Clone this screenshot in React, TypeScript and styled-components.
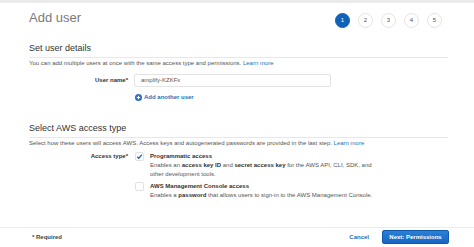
import React from "react";
import styled, { createGlobalStyle } from "styled-components";

const GlobalStyle = createGlobalStyle`
  html, body {
    margin: 0;
    padding: 0;
    background: #ffffff;
  }
  body {
    font-family: "Liberation Sans", Arial, sans-serif;
    color: #444;
  }
`;

const Page = styled.div`
  width: 474px;
  height: 247px;
  box-sizing: border-box;
  border-top: 3px solid #ebebeb;
  display: flex;
  flex-direction: column;
  overflow: hidden;
`;

const Header = styled.div`
  display: flex;
  justify-content: space-between;
  align-items: center;
  padding: 6px 32px 0 29px;
  height: 22px;
`;

const Title = styled.h1`
  margin: 0;
  font-size: 13px;
  font-weight: normal;
  color: #7a7a7a;
  line-height: 16px;
  margin-top: -4px;
`;

const Steps = styled.div`
  display: flex;
  gap: 8px;
`;

const Step = styled.div<{ active?: boolean }>`
  width: 15px;
  height: 15px;
  box-sizing: border-box;
  border-radius: 50%;
  display: flex;
  align-items: center;
  justify-content: center;
  font-size: 6px;
  color: ${({ active }) => (active ? "#ffffff" : "#555")};
  background: ${({ active }) => (active ? "#1161b8" : "#ffffff")};
  border: 1px solid ${({ active }) => (active ? "#1161b8" : "#e4e4e4")};
`;

const Section = styled.section<{ top: number }>`
  padding: 0 26px 0 29px;
  margin-top: ${({ top }) => top}px;
`;

const SectionTitle = styled.h2`
  margin: 0;
  font-size: 9px;
  font-weight: normal;
  color: #333;
  line-height: 11px;
  padding-bottom: 3px;
  border-bottom: 1px solid #e8e8e8;
`;

const Description = styled.p`
  margin: 1px 0 0;
  font-size: 6px;
  line-height: 8px;
  color: #555;
`;

const Link = styled.a`
  color: #2a6fb8;
  text-decoration: none;
`;

const Row = styled.div<{ top: number }>`
  display: flex;
  align-items: flex-start;
  margin-top: ${({ top }) => top}px;
`;

const Label = styled.div<{ lineTop?: number }>`
  width: 99px;
  text-align: right;
  padding-right: 6px;
  font-size: 6px;
  font-weight: bold;
  color: #333;
  line-height: 8px;
  padding-top: ${({ lineTop }) => lineTop ?? 0}px;
`;

const Control = styled.div`
  display: flex;
  flex-direction: column;
`;

const Input = styled.div`
  width: 197px;
  height: 13px;
  box-sizing: border-box;
  border: 1px solid #e3e3e3;
  border-radius: 2px;
  padding: 0 6px;
  font-size: 6px;
  line-height: 11px;
  color: #555;
`;

const AddLink = styled.div`
  display: flex;
  align-items: center;
  gap: 2px;
  margin-top: 6px;
  font-size: 6px;
  font-weight: bold;
  color: #2a6fb8;
  line-height: 8px;
  padding-left: 1px;
`;

const Option = styled.div<{ top?: number }>`
  display: flex;
  gap: 6px;
  margin-top: ${({ top }) => top ?? 0}px;
`;

const Box = styled.div`
  width: 9px;
  height: 9px;
  box-sizing: border-box;
  border: 1px solid #e2e2e2;
  border-radius: 2px;
  background: #fff;
  display: flex;
  align-items: center;
  justify-content: center;
  flex-shrink: 0;
  margin-left: 1px;
`;

const OptionText = styled.div`
  font-size: 6px;
  line-height: 9px;
  color: #555;
  width: 232px;

  strong {
    color: #333;
  }
`;

const OptionTitle = styled.div`
  font-weight: bold;
  color: #333;
`;

const Footer = styled.div`
  margin-top: auto;
  border-top: 1px solid #ececec;
  height: 18px;
  display: flex;
  align-items: center;
  padding: 0 25px 0 32px;
  margin-bottom: 1px;
`;

const Required = styled.div`
  font-size: 6px;
  font-weight: bold;
  color: #444;
  flex: 1;
`;

const Cancel = styled.div`
  font-size: 6px;
  font-weight: bold;
  color: #2a6fb8;
  margin-right: 13px;
`;

const Primary = styled.div`
  height: 14px;
  width: 67px;
  box-sizing: border-box;
  border-radius: 2px;
  background: linear-gradient(#2a7fd6, #1666c3);
  border: 1px solid #125aae;
  color: #fff;
  font-size: 6px;
  font-weight: bold;
  display: flex;
  align-items: center;
  justify-content: center;
`;

const PlusIcon = () => (
  <svg width="7" height="7" viewBox="0 0 14 14">
    <circle cx="7" cy="7" r="7" fill="#2a6fb8" />
    <path d="M7 3.5v7M3.5 7h7" stroke="#ffffff" strokeWidth="2.4" />
  </svg>
);

const Check = () => (
  <svg width="7" height="7" viewBox="0 0 14 14">
    <path d="M2.5 7.5l3 3 6-7" fill="none" stroke="#1a64b8" strokeWidth="2.4" />
  </svg>
);

export default function App() {
  return (
    <>
      <GlobalStyle />
      <Page>
        <Header>
          <Title>Add user</Title>
          <Steps>
            {[1, 2, 3, 4, 5].map((n) => (
              <Step key={n} active={n === 1}>
                {n}
              </Step>
            ))}
          </Steps>
        </Header>

        <Section top={12}>
          <SectionTitle>Set user details</SectionTitle>
          <Description>
            You can add multiple users at once with the same access type and permissions.{" "}
            <Link>Learn more</Link>
          </Description>
          <Row top={7}>
            <Label lineTop={2}>User name*</Label>
            <Control>
              <Input>amplify-KZKFx</Input>
              <AddLink>
                <PlusIcon />
                Add another user
              </AddLink>
            </Control>
          </Row>
        </Section>

        <Section top={22}>
          <SectionTitle>Select AWS access type</SectionTitle>
          <Description>
            Select how these users will access AWS. Access keys and autogenerated passwords are
            provided in the last step. <Link>Learn more</Link>
          </Description>
          <Row top={5}>
            <Label>Access type*</Label>
            <Control>
              <Option>
                <Box>
                  <Check />
                </Box>
                <OptionText>
                  <OptionTitle>Programmatic access</OptionTitle>
                  {"Enables an "}
                  <strong>access key ID</strong>
                  {" and "}
                  <strong>secret access key</strong>
                  {" for the AWS API, CLI, SDK, and"}
                  <br />
                  {"other development tools."}
                </OptionText>
              </Option>
              <Option top={3}>
                <Box />
                <OptionText>
                  <OptionTitle>AWS Management Console access</OptionTitle>
                  {"Enables a "}
                  <strong>password</strong>
                  {" that allows users to sign-in to the AWS Management Console."}
                </OptionText>
              </Option>
            </Control>
          </Row>
        </Section>

        <Footer>
          <Required>* Required</Required>
          <Cancel>Cancel</Cancel>
          <Primary>Next: Permissions</Primary>
        </Footer>
      </Page>
    </>
  );
}
